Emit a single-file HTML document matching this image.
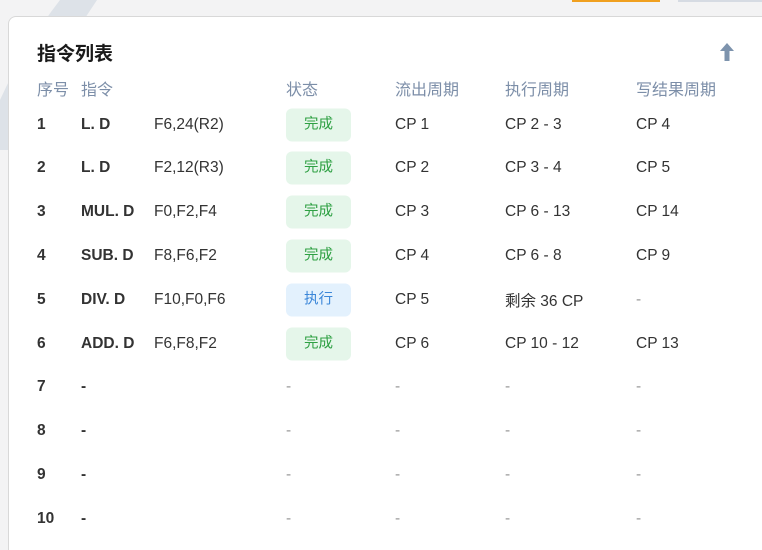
<!DOCTYPE html>
<html style="overflow:hidden;width:762px;height:550px"><head><meta charset="utf-8"><style>
body{margin:0;width:762px;height:550px;overflow:hidden;background:#f3f3f4;font-family:"Liberation Sans","Noto Sans CJK SC",sans-serif}
.w{position:relative;width:762px;height:550px;overflow:hidden}
.o{position:absolute;left:572px;top:0;width:88px;height:2px;background:#f0a020}
.g{position:absolute;left:678px;top:0;width:84px;height:2px;background:#d6dbe3}
.card{position:absolute;left:8px;top:16px;width:754px;height:534px;background:#fff;border:1.5px solid #d8d8d8;border-right:none;border-bottom:none;border-radius:8px 0 0 0;box-sizing:border-box}
.t{position:absolute;left:37px;top:39px;font-size:19px;font-weight:bold;color:#1a1a1a}
.c{position:absolute;font-size:15.5px;color:#333;white-space:nowrap;transform:translateY(-50%)}
.h{color:#7c8ea8;font-size:16px}
.b{font-weight:bold;color:#333}
.bd{position:absolute;left:286px;width:65px;height:33px;border-radius:6px;font-size:14.5px;text-align:center;line-height:33px;transform:translateY(-50%)}
.ok{background:#e5f6ea;color:#2ea043}
.ex{background:#e3f1fd;color:#3a86d8}
.d{color:#999}
</style></head><body><div class="w">
<svg style="position:absolute;left:0;top:0" width="120" height="160"><path d="M60 0H97Q50 70 8 150H0V100Q25 45 60 0Z" fill="#dde2e8"/></svg>
<div class="o"></div><div class="g"></div>
<div class="card"></div>
<div class="t">指令列表</div>
<svg style="position:absolute;left:719px;top:43px" width="16" height="18" viewBox="0 0 16 18"><path d="M8 0L15 8H10.5V18H5.5V8H1Z" fill="#7d93ad"/></svg>
<div class="c h" style="left:37px;top:88px">序号</div>
<div class="c h" style="left:81px;top:88px">指令</div>
<div class="c h" style="left:286px;top:88px">状态</div>
<div class="c h" style="left:395px;top:88px">流出周期</div>
<div class="c h" style="left:505px;top:88px">执行周期</div>
<div class="c h" style="left:636px;top:88px">写结果周期</div>

<div class="c b" style="left:37px;top:125px">1</div><div class="c b" style="left:81px;top:125px">L. D</div><div class="c" style="left:154px;top:125px">F6,24(R2)</div><div class="bd ok" style="top:125px">完成</div><div class="c" style="left:395px;top:125px">CP 1</div><div class="c" style="left:505px;top:125px">CP 2 - 3</div><div class="c" style="left:636px;top:125px">CP 4</div>

<div class="c b" style="left:37px;top:168px">2</div><div class="c b" style="left:81px;top:168px">L. D</div><div class="c" style="left:154px;top:168px">F2,12(R3)</div><div class="bd ok" style="top:168px">完成</div><div class="c" style="left:395px;top:168px">CP 2</div><div class="c" style="left:505px;top:168px">CP 3 - 4</div><div class="c" style="left:636px;top:168px">CP 5</div>

<div class="c b" style="left:37px;top:212px">3</div><div class="c b" style="left:81px;top:212px">MUL. D</div><div class="c" style="left:154px;top:212px">F0,F2,F4</div><div class="bd ok" style="top:212px">完成</div><div class="c" style="left:395px;top:212px">CP 3</div><div class="c" style="left:505px;top:212px">CP 6 - 13</div><div class="c" style="left:636px;top:212px">CP 14</div>

<div class="c b" style="left:37px;top:256px">4</div><div class="c b" style="left:81px;top:256px">SUB. D</div><div class="c" style="left:154px;top:256px">F8,F6,F2</div><div class="bd ok" style="top:256px">完成</div><div class="c" style="left:395px;top:256px">CP 4</div><div class="c" style="left:505px;top:256px">CP 6 - 8</div><div class="c" style="left:636px;top:256px">CP 9</div>

<div class="c b" style="left:37px;top:300px">5</div><div class="c b" style="left:81px;top:300px">DIV. D</div><div class="c" style="left:154px;top:300px">F10,F0,F6</div><div class="bd ex" style="top:300px">执行</div><div class="c" style="left:395px;top:300px">CP 5</div><div class="c" style="left:505px;top:300px">剩余 36 CP</div><div class="c d" style="left:636px;top:300px">-</div>

<div class="c b" style="left:37px;top:344px">6</div><div class="c b" style="left:81px;top:344px">ADD. D</div><div class="c" style="left:154px;top:344px">F6,F8,F2</div><div class="bd ok" style="top:344px">完成</div><div class="c" style="left:395px;top:344px">CP 6</div><div class="c" style="left:505px;top:344px">CP 10 - 12</div><div class="c" style="left:636px;top:344px">CP 13</div>

<div class="c b" style="left:37px;top:387px">7</div><div class="c b" style="left:81px;top:387px">-</div><div class="c d" style="left:286px;top:387px">-</div><div class="c d" style="left:395px;top:387px">-</div><div class="c d" style="left:505px;top:387px">-</div><div class="c d" style="left:636px;top:387px">-</div>
<div class="c b" style="left:37px;top:431px">8</div><div class="c b" style="left:81px;top:431px">-</div><div class="c d" style="left:286px;top:431px">-</div><div class="c d" style="left:395px;top:431px">-</div><div class="c d" style="left:505px;top:431px">-</div><div class="c d" style="left:636px;top:431px">-</div>
<div class="c b" style="left:37px;top:475px">9</div><div class="c b" style="left:81px;top:475px">-</div><div class="c d" style="left:286px;top:475px">-</div><div class="c d" style="left:395px;top:475px">-</div><div class="c d" style="left:505px;top:475px">-</div><div class="c d" style="left:636px;top:475px">-</div>
<div class="c b" style="left:37px;top:519px">10</div><div class="c b" style="left:81px;top:519px">-</div><div class="c d" style="left:286px;top:519px">-</div><div class="c d" style="left:395px;top:519px">-</div><div class="c d" style="left:505px;top:519px">-</div><div class="c d" style="left:636px;top:519px">-</div>
</div></body></html>
